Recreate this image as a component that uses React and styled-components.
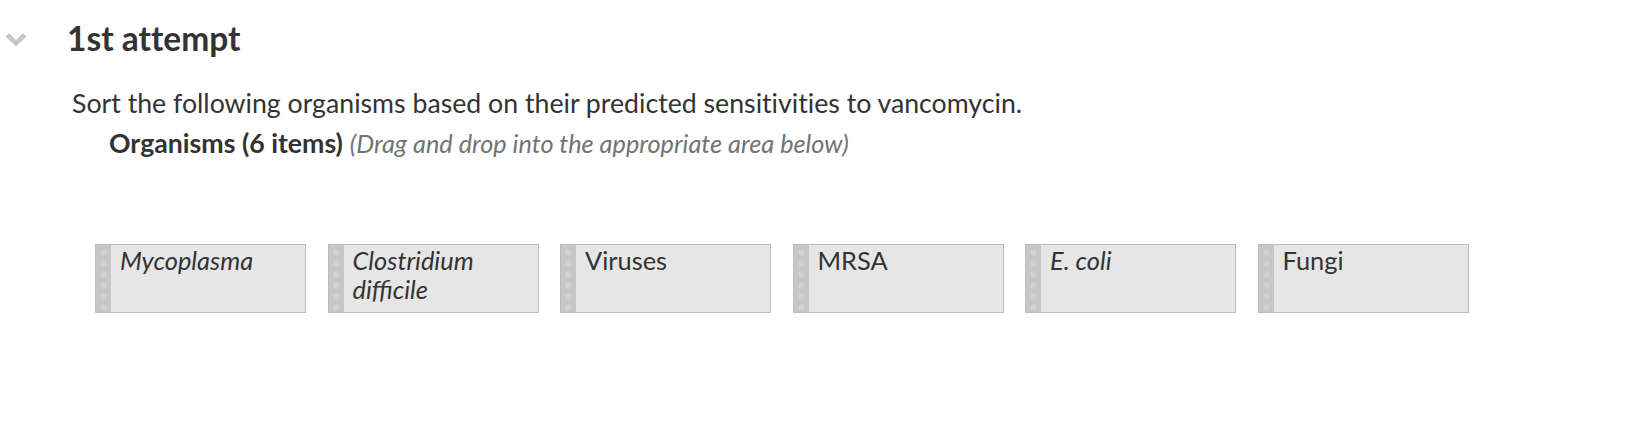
import styled, { createGlobalStyle } from "styled-components";

const GlobalStyle = createGlobalStyle`
  body {
    margin: 0;
    background: #fff;
    font-family: Lato, "Open Sans", sans-serif;
    color: #333;
  }
`;

const items = [
  { label: "Mycoplasma", italic: true },
  { label: "Clostridium difficile", italic: true },
  { label: "Viruses" },
  { label: "MRSA" },
  { label: "E. coli", italic: true },
  { label: "Fungi" },
];

const App = () => {
  return (
    <>
      <GlobalStyle />
      <Page>
        <Header>
          <Chevron viewBox="0 0 24 16">
            <path d="M1.5 4.5 L5 1 L12 8 L19 1 L22.5 4.5 L12 14.5 Z" fill="#c8c8c8" />
          </Chevron>
          <Title>1st attempt</Title>
        </Header>
        <Question>
          <Prompt>
            Sort the following organisms based on their predicted
            sensitivities to vancomycin.
          </Prompt>
          <GroupLabel>
            <strong>Organisms (6 items)</strong>{" "}
            <Hint>(Drag and drop into the appropriate area below)</Hint>
          </GroupLabel>
          <Cards>
            {items.map((item) => (
              <Card key={item.label}>
                <Handle />
                <CardText $italic={item.italic}>{item.label}</CardText>
              </Card>
            ))}
          </Cards>
        </Question>
      </Page>
    </>
  );
};

const Page = styled.div`
  width: 1632px;
  height: 428px;
  padding-top: 18px;
  box-sizing: border-box;
  font-variant-ligatures: no-common-ligatures;
`;

const Header = styled.div`
  display: flex;
  align-items: center;
  gap: 39px;
  padding-left: 4px;
`;

const Chevron = styled.svg`
  width: 24px;
  height: 16px;
  margin-top: 3px;
`;

const Title = styled.h2`
  margin: 0;
  font-size: 33.5px;
  font-weight: 700;
  color: #333;
  line-height: 40px;
`;

const Question = styled.div`
  padding-left: 72px;
  padding-top: 25px;
`;

const Prompt = styled.p`
  margin: 0;
  font-size: 26.7px;
  line-height: 40px;
  color: #333;
`;

const GroupLabel = styled.div`
  padding-left: 37px;
  font-size: 26.7px;
  line-height: 40px;
  color: #333;

  strong {
    font-weight: 700;
  }
`;

const Hint = styled.em`
  font-size: 25.3px;
  color: #737373;
`;

const Cards = styled.div`
  display: flex;
  gap: 21.5px;
  margin-top: 81px;
  margin-left: 23px;
`;

const Card = styled.div`
  display: flex;
  width: 211px;
  height: 69px;
  box-sizing: border-box;
  background: #e6e6e6;
  border: 1px solid #bcbcbc;
`;

const Handle = styled.div`
  flex: 0 0 15px;
  background-color: #c6c6c6;
  background-image: radial-gradient(circle, #d0d0d0 3px, transparent 3.5px);
  background-size: 15px 11px;
  background-position: 0 2px;
`;

const CardText = styled.div`
  padding: 1px 8px 0 9px;
  font-size: 25.4px;
  line-height: 29px;
  color: #333;
  font-style: ${(p) => (p.$italic ? "italic" : "normal")};
  font-variant-ligatures: common-ligatures;
`;

export default App;
